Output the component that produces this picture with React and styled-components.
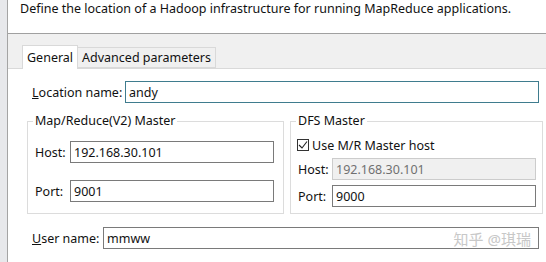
import React from 'react';
import styled, { createGlobalStyle } from 'styled-components';

const GlobalStyle = createGlobalStyle`
    html, body {
        margin: 0;
        padding: 0;
        background: #fff;
    }

    body {
        font-family: "Noto Sans", "Noto Sans CJK SC", sans-serif;
        font-size: 12.5px;
        color: #111;
    }
`;

const Window = styled.div`
    display: flex;
    width: 546px;
    height: 262px;
    overflow: hidden;
`;

const SideStrip = styled.div`
    flex-shrink: 0;
    width: 7px;
    background: #e7e8eb;
    border-right: 1px solid #a4a4a4;
`;

const Main = styled.div`
    flex: 1;
    display: flex;
    flex-direction: column;
    min-width: 0;
`;

const Header = styled.div`
    height: 33px;
    padding-left: 12px;
    line-height: 17px;
    border-bottom: 1px solid #a0a0a0;
    white-space: nowrap;
`;

const TabStrip = styled.div`
    display: flex;
    align-items: flex-end;
    height: 34px;
    padding-left: 14px;
    background: #f0f0f0;
    border-bottom: 1px solid #d9d9d9;
`;

const Tab = styled.div`
    box-sizing: border-box;
    display: flex;
    align-items: center;
    height: ${props => (props.active ? '24px' : '21px')};
    margin-bottom: ${props => (props.active ? '-1px' : '0')};
    padding: 0 4px;
    background: ${props => (props.active ? '#fff' : '#f0f0f0')};
    border: 1px solid #d9d9d9;
    border-bottom: ${props => (props.active ? 'none' : '1px solid #d9d9d9')};
    border-left: ${props => (props.active ? '1px solid #d9d9d9' : 'none')};
    white-space: nowrap;
`;

const Panel = styled.div`
    flex: 1;
    display: flex;
    flex-direction: column;
    padding: 12px 3px 0 19px;
    background: #fff;
`;

const FieldRow = styled.label`
    position: relative;
    display: grid;
    grid-template-columns: ${props => props.labelWidth}px 1fr;
    align-items: center;
    margin: ${props => props.margin || '0'};
    padding-left: 5px;
    margin-right: 4px;
`;

const Input = styled.input`
    box-sizing: border-box;
    width: 100%;
    height: 22px;
    margin: 0;
    padding: 0 3px;
    font: inherit;
    color: #111;
    background: #fff;
    border: 1px solid ${props => (props.focused ? '#3f7c8e' : '#7a7a7a')};
    outline: none;

    &:disabled {
        color: #707070;
        background: #f0f0f0;
        border-color: #cccccc;
    }
`;

const Groups = styled.div`
    display: grid;
    grid-template-columns: 257px 1fr;
    gap: 6px;
    margin-top: 10px;
`;

const Group = styled.fieldset`
    box-sizing: border-box;
    display: flex;
    flex-direction: column;
    gap: ${props => props.gap};
    min-width: 0;
    margin: 0;
    padding: ${props => props.pad};
    border: 1px solid #dcdcdc;

    legend {
        padding: 0 2px;
        margin-left: -2px;
        line-height: 16px;
    }
`;

const GroupRow = styled.div`
    display: grid;
    grid-template-columns: ${props => props.labelWidth}px 1fr;
    align-items: center;
`;

const CheckRow = styled.label`
    display: flex;
    align-items: center;
    gap: 3px;
    height: 16px;
    margin-left: -1px;
`;

const CheckBox = styled.span`
    box-sizing: border-box;
    display: inline-flex;
    align-items: center;
    justify-content: center;
    width: 12px;
    height: 12px;
    border: 1px solid #333;
    background: #fff;
`;

const Watermark = styled.span`
    position: absolute;
    right: 8px;
    top: 50%;
    transform: translateY(-50%);
    font-size: 15px;
    color: #c8c8c8;
    pointer-events: none;
    white-space: nowrap;
`;

const App = () => (
    <Window>
        <GlobalStyle />
        <SideStrip />
        <Main>
            <Header>Define the location of a Hadoop infrastructure for running MapReduce applications.</Header>
            <TabStrip>
                <Tab active>General</Tab>
                <Tab>Advanced parameters</Tab>
            </TabStrip>
            <Panel>
                <FieldRow labelWidth={93}>
                    <span><u>L</u>ocation name:</span>
                    <Input focused defaultValue="andy" />
                </FieldRow>
                <Groups>
                    <Group pad="12px 9px 11px 7px" gap="17px">
                        <legend>Map/Reduce(V2) Master</legend>
                        <GroupRow labelWidth={35}>
                            <span>Host:</span>
                            <Input defaultValue="192.168.30.101" />
                        </GroupRow>
                        <GroupRow labelWidth={35}>
                            <span>Port:</span>
                            <Input defaultValue="9001" />
                        </GroupRow>
                    </Group>
                    <Group pad="8px 6px 5px 7px" gap="5px">
                        <legend>DFS Master</legend>
                        <CheckRow>
                            <CheckBox>
                                <svg width="10" height="10" viewBox="0 0 10 10">
                                    <path d="M1 5 L4 8 L9 1.5" fill="none" stroke="#222" strokeWidth="1.1" />
                                </svg>
                            </CheckBox>
                            Use M/R Master host
                        </CheckRow>
                        <GroupRow labelWidth={34}>
                            <span>Host:</span>
                            <Input disabled defaultValue="192.168.30.101" />
                        </GroupRow>
                        <GroupRow labelWidth={34}>
                            <span>Port:</span>
                            <Input defaultValue="9000" />
                        </GroupRow>
                    </Group>
                </Groups>
                <FieldRow labelWidth={71} margin="13px 0 0 0">
                    <span><u>U</u>ser name:</span>
                    <Input defaultValue="mmww" />
                    <Watermark>知乎 @琪瑞</Watermark>
                </FieldRow>
            </Panel>
        </Main>
    </Window>
);

export default App;
